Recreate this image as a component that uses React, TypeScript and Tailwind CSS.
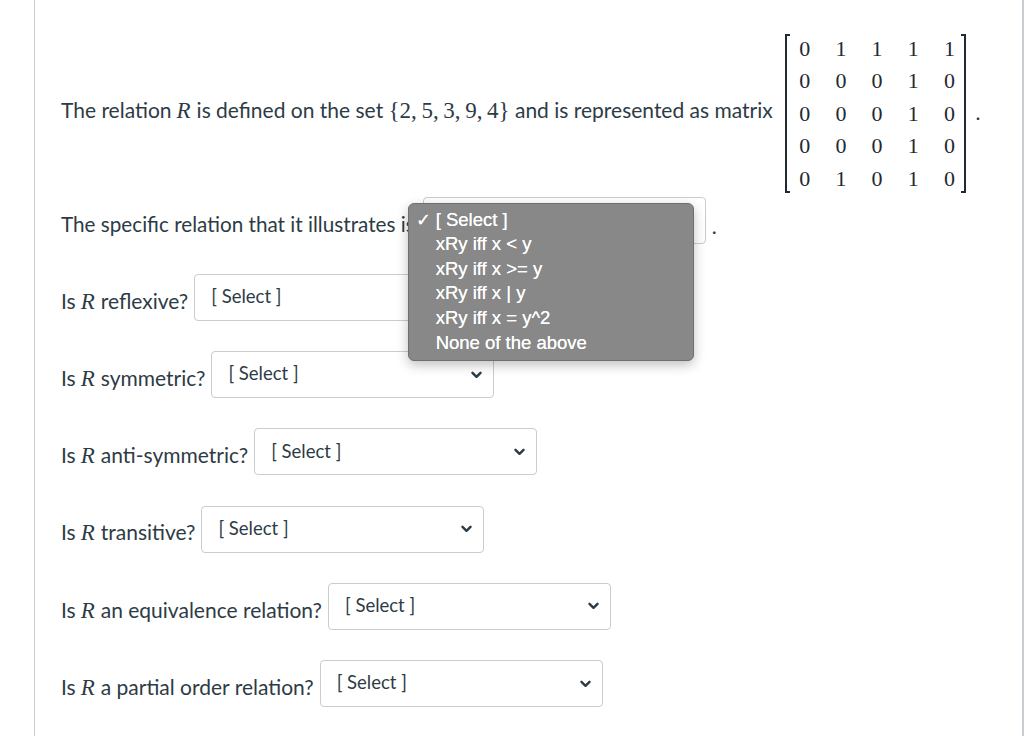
import React from "react";

const TEXT = "text-[#2d3b45]";

function Chevron() {
  return (
    <svg width="11" height="8" viewBox="0 0 11 8" className="shrink-0">
      <polyline points="1.5,1.8 5.5,5.8 9.5,1.8" fill="none" stroke="#2d3b45" strokeWidth="2.4" strokeLinecap="round" strokeLinejoin="round" />
    </svg>
  );
}

function SelectBox({ children }: { children?: React.ReactNode }) {
  return (
    <div className="relative w-[283px] h-[47px] shrink-0 rounded-[4px] border border-[#c7cdd1] bg-white flex items-center justify-between pl-[16px] pr-[11px]">
      <span className={`text-[18.5px] ${TEXT} font-['Lato'] -mt-[1px]`}>[ Select ]</span>
      <Chevron />
      {children}
    </div>
  );
}

function R() {
  return <span className="font-['Liberation_Serif'] italic text-[23px] ml-[5px] mr-[6px]">R</span>;
}

function Row({ pre, post, menu, dot }: { pre: string; post: string; menu?: boolean; dot?: boolean }) {
  return (
    <div className="flex items-center h-[47px]">
      <span className={`pt-[9px] whitespace-pre ${menu ? "text-[20.7px]" : ""}`}>
        {pre}
        {pre === "Is" ? <R /> : null}
        {post}
      </span>
      <div className={menu ? "ml-[8px]" : "ml-[6px]"}>
        <SelectBox>
          {menu ? <Menu /> : null}
        </SelectBox>
      </div>
      {dot ? <span className="ml-[6px] pt-[12px]">.</span> : null}
    </div>
  );
}

function Menu() {
  const items = ["[ Select ]", "xRy iff x < y", "xRy iff x >= y", "xRy iff x | y", "xRy iff x = y^2", "None of the above"];
  return (
    <div className="absolute left-[-16px] top-[5px] w-[286px] h-[158px] rounded-[6px] bg-[#888888] border border-[#6f6f6f] shadow-[0_4px_12px_rgba(0,0,0,0.25)] pt-[4px] z-10">
      {items.map((t, i) => (
        <div key={i} className="h-[24.6px] flex items-center text-white text-[18.5px] font-['Liberation_Sans'] leading-none [text-shadow:0_0_0.5px_#fff]">
          <span className="w-[27px] pl-[3px] text-[18px] text-center">{i === 0 ? "✓" : ""}</span>
          <span>{t}</span>
        </div>
      ))}
    </div>
  );
}

function Matrix() {
  const m = [
    [0, 1, 1, 1, 1],
    [0, 0, 0, 1, 0],
    [0, 0, 0, 1, 0],
    [0, 0, 0, 1, 0],
    [0, 1, 0, 1, 0],
  ];
  return (
    <div className="flex items-center">
      <div className="w-[5px] h-[159px] border-l-2 border-t-2 border-b-2 border-[#1f2a32]" />
      <div className="grid grid-cols-[repeat(5,12px)] gap-x-[24.2px] ml-[9px] font-['Liberation_Serif'] text-[22px] text-[#1f2a32]">
        {m.flat().map((v, i) => (
          <div key={i} className="h-[32.5px] flex items-center justify-center">{v}</div>
        ))}
      </div>
      <div className="ml-[6px] w-[5px] h-[159px] border-r-2 border-t-2 border-b-2 border-[#1f2a32]" />
    </div>
  );
}

export default function App() {
  return (
    <div className={`w-[1024px] h-[736px] overflow-hidden bg-white ${TEXT} font-['Lato'] text-[21px]`}>
      <div className="ml-[34px] w-[990px] h-[736px] border-l border-r-2 border-[#c7cdd1] pl-[26px]">
        <div className="flex items-center pt-[32px]">
          <span className="whitespace-pre -mt-[4px]">
            The relation<R />is defined on the set{" "}
            <span className="font-['Liberation_Serif'] text-[23px]">{"{2,\u20095,\u20093,\u20099,\u20094}"}</span>
            {" "}and is represented as matrix
          </span>
          <div className="ml-[12px]">
            <Matrix />
          </div>
          <span className="ml-[9px] -mt-[4px]">.</span>
        </div>
        <div className="mt-[2px] flex flex-col gap-[30.3px]">
          <Row pre="The specific relation that it illustrates is" post="" menu dot />
          <Row pre="Is" post="reflexive?" />
          <Row pre="Is" post="symmetric?" />
          <Row pre="Is" post="anti-symmetric?" />
          <Row pre="Is" post="transitive?" />
          <Row pre="Is" post="an equivalence relation?" />
          <Row pre="Is" post="a partial order relation?" />
        </div>
      </div>
    </div>
  );
}
